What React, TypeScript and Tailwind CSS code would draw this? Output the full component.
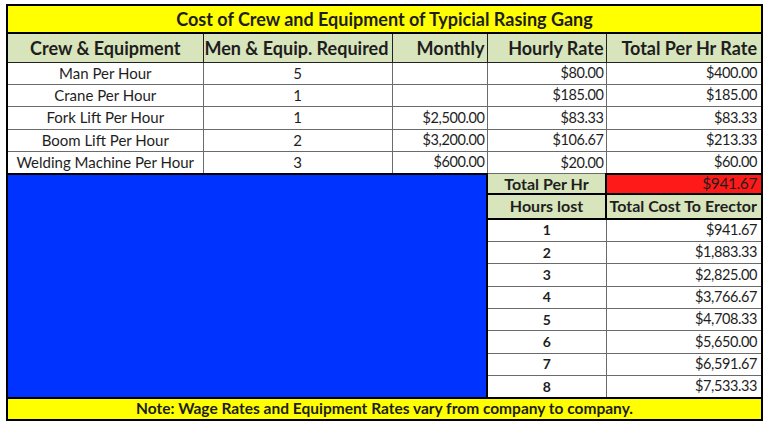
const crew = [
  { name: "Man Per Hour", qty: "5", monthly: "", hourly: "$80.00", total: "$400.00" },
  { name: "Crane Per Hour", qty: "1", monthly: "", hourly: "$185.00", total: "$185.00" },
  { name: "Fork Lift Per Hour", qty: "1", monthly: "$2,500.00", hourly: "$83.33", total: "$83.33" },
  { name: "Boom Lift Per Hour", qty: "2", monthly: "$3,200.00", hourly: "$106.67", total: "$213.33" },
  { name: "Welding Machine Per Hour", qty: "3", monthly: "$600.00", hourly: "$20.00", total: "$60.00" },
];

const lost = [
  "$941.67",
  "$1,883.33",
  "$2,825.00",
  "$3,766.67",
  "$4,708.33",
  "$5,650.00",
  "$6,591.67",
  "$7,533.33",
];

const cell = "border border-[#6b6b6b] p-0";
const num = "border border-[#6b6b6b] p-0 text-right text-[14.5px] tracking-[-0.4px]";
const head = "border border-[#222] bg-[#d8e4bc] font-bold text-[18px] p-0";

export default function App() {
  return (
    <div className="w-[768px] h-[423px] bg-white pt-[4px] pl-[6px] font-['Lato','Liberation_Sans',sans-serif] text-[#1e1e1e] leading-none whitespace-nowrap">
      <table className="table-fixed border-collapse border-2 border-black w-[755px]">
        <colgroup>
          <col className="w-[196px]" />
          <col className="w-[189px]" />
          <col className="w-[95px]" />
          <col className="w-[119px]" />
          <col className="w-[156px]" />
        </colgroup>
        <tbody>
          {/* Title */}
          <tr className="h-[28px]">
            <td colSpan={5} className="border-2 border-black bg-[#ffff00] text-center font-bold text-[18px] p-0">
              Cost of Crew and Equipment of Typicial Rasing Gang
            </td>
          </tr>

          {/* Header */}
          <tr className="h-[29px]">
            <td className={`${head} text-center`}>Crew &amp; Equipment</td>
            <td className={`${head} text-left pl-[1px]`}>Men &amp; Equip. Required</td>
            <td className={`${head} text-right pr-[2px]`}>Monthly</td>
            <td className={`${head} text-right pr-[2px]`}>Hourly Rate</td>
            <td className={`${head} text-right pr-[4px]`}>Total Per Hr Rate</td>
          </tr>

          {/* Crew rows */}
          {crew.map((r) => (
            <tr key={r.name} className="h-[22.4px] text-[15px]">
              <td className={`${cell} text-center`}>{r.name}</td>
              <td className={`${cell} text-center`}>{r.qty}</td>
              <td className={`${num} pr-[2px]`}>{r.monthly}</td>
              <td className={`${num} pr-[2px]`}>{r.hourly}</td>
              <td className={`${num} pr-[4px]`}>{r.total}</td>
            </tr>
          ))}

          {/* Total per hour */}
          <tr className="h-[20px]">
            <td colSpan={3} rowSpan={10} className="border-2 border-black bg-[#0033ff] p-0" />
            <td className="border border-[#444] bg-[#d8e4bc] text-center font-bold text-[16px] p-0">Total Per Hr</td>
            <td className="border-2 border-black bg-[#ff1a1a] text-right text-[15.5px] tracking-[-0.4px] pr-[4px] p-0">$941.67</td>
          </tr>

          {/* Hours lost header */}
          <tr className="h-[25px]">
            <td className="border-2 border-black bg-[#d8e4bc] text-center font-bold text-[16px] p-0">Hours lost</td>
            <td className="border-2 border-black bg-[#d8e4bc] text-right font-bold text-[16px] pr-[4px] p-0">Total Cost To Erector</td>
          </tr>

          {lost.map((v, i) => (
            <tr key={v} className="h-[22.4px]">
              <td className={`${cell} text-center font-bold text-[14px]`}>{i + 1}</td>
              <td className={`${num} pr-[4px]`}>{v}</td>
            </tr>
          ))}

          {/* Note */}
          <tr className="h-[22px]">
            <td colSpan={5} className="border-2 border-black bg-[#ffff00] text-center font-bold text-[15.5px] p-0">
              Note: Wage Rates and Equipment Rates vary from company to company.
            </td>
          </tr>
        </tbody>
      </table>
    </div>
  );
}
